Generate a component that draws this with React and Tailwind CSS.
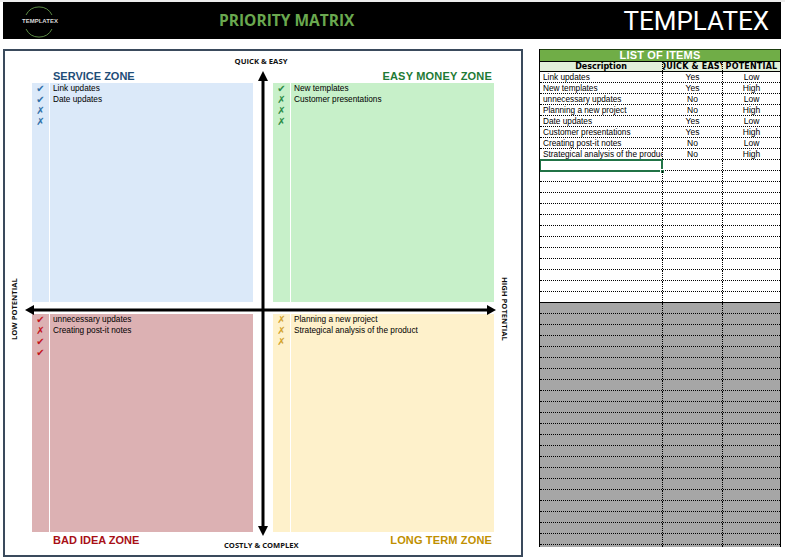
import React from "react";

const SANS = "font-['Liberation_Sans',Arial,sans-serif]";
const PIXEL = "font-['DejaVu_Sans',Verdana,sans-serif]";

// Quadrant contents
const zones = {
  service: {
    box: "bg-[#dbe9f9]",
    mark: "text-[#2f6fa8]",
    marks: ["✔", "✔", "✗", "✗"],
    items: ["Link updates", "Date updates"],
  },
  easy: {
    box: "bg-[#c7f0c9]",
    mark: "text-[#2b8a45]",
    marks: ["✔", "✗", "✗", "✗"],
    items: ["New templates", "Customer presentations"],
  },
  bad: {
    box: "bg-[#dcb1b3]",
    mark: "text-[#c4141c]",
    marks: ["✔", "✗", "✔", "✔"],
    items: ["unnecessary updates", "Creating post-it notes"],
  },
  long: {
    box: "bg-[#fef1cb]",
    mark: "text-[#d3a22e]",
    marks: ["✗", "✗", "✗"],
    items: ["Planning a new project", "Strategical analysis of the product"],
  },
};

const rows = [
  ["Link updates", "Yes", "Low"],
  ["New templates", "Yes", "High"],
  ["unnecessary updates", "No", "Low"],
  ["Planning a new project", "No", "High"],
  ["Date updates", "Yes", "Low"],
  ["Customer presentations", "Yes", "High"],
  ["Creating post-it notes", "No", "Low"],
  ["Strategical analysis of the product", "No", "High"],
];

const Zone = ({ zone, height }) => (
  <div className={`flex ${zone.box} ${height}`}>
    <div className="w-[17px] shrink-0 border-r border-white box-content">
      {zone.marks.map((m, i) => (
        <div key={i} className={`h-[11px] flex items-center justify-center text-[10px] font-bold leading-none ${PIXEL} ${zone.mark}`}>
          {m}
        </div>
      ))}
    </div>
    <div className="pl-[3px] pt-[1px]">
      {zone.items.map((t) => (
        <div key={t} className={`h-[11px] flex items-center text-[8.25px] leading-none whitespace-nowrap text-black ${SANS}`}>
          {t}
        </div>
      ))}
    </div>
  </div>
);

const Row = ({ row, bottom, selected }) => (
  <div className={`relative flex h-[11px] border-b border-black ${bottom ? "border-solid" : "border-dotted"}`}>
    <div className={`w-[122px] shrink-0 overflow-hidden whitespace-nowrap pl-[3px] text-[8.25px] leading-[11px] ${SANS}`}>
      {row[0]}
    </div>
    <div className={`w-[60px] shrink-0 border-l border-dotted border-black text-center text-[8.5px] leading-[10px] ${SANS}`}>{row[1]}</div>
    <div className={`flex-1 border-l border-dotted border-black text-center text-[8.5px] leading-[10px] ${SANS}`}>{row[2]}</div>
    {selected && (
      <>
        <div className="absolute left-[-1px] top-[-1px] w-[124px] h-[13px] border-2 border-[#217346]" />
        <div className="absolute left-[120px] top-[9px] w-[5px] h-[5px] bg-[#217346] border border-white" />
      </>
    )}
  </div>
);

const emptyRow = ["", "", ""];

export default function App() {
  return (
    <div className="w-[785px] h-[560px] overflow-hidden bg-white">
      <div className="h-[2px] bg-[#ececec]" />

      {/* Top banner */}
      <div className="mx-[3px] w-[778px] h-[37px] bg-black flex items-center justify-between relative">
        <div className="relative w-[60px] h-[37px] ml-[4px]">
          <svg className="absolute left-[14px] top-[2px]" width="36" height="36" viewBox="0 0 36 36" fill="none">
            <path d="M5 11 A14.5 14.5 0 0 1 31 11" stroke="#5c8a45" strokeWidth="1" />
            <path d="M5 25 A14.5 14.5 0 0 0 31 25" stroke="#5c8a45" strokeWidth="1" />
          </svg>
          <span className={`absolute left-[15px] top-[16px] text-[6px] leading-[7px] font-bold text-[#d9d9d9] ${SANS}`}>TEMPLATEX</span>
        </div>
        <div className="absolute left-[216px] top-0 h-[37px] flex items-center text-[#6aa84f] text-[15.5px] font-bold font-['Open_Sans',sans-serif]">
          PRIORITY MATRIX
        </div>
        <div className="mr-[12px] text-white text-[26px] leading-none font-['Roboto',sans-serif]">
          TEMPLATEX
        </div>
      </div>

      <div className="mt-[10px] ml-[3px] flex items-start gap-[16px]">
        {/* Matrix */}
        <div className="relative w-[520px] h-[508px] border-2 border-[#3a4a5c] pl-[27px]">
          <div className="h-[21px] pt-[5px] text-center pr-[31px] text-[7.7px] leading-[10px] font-bold text-[#111] font-['Open_Sans',sans-serif] whitespace-nowrap">
            QUICK &amp; EASY
          </div>
          <div className="grid grid-cols-[221px_221px] gap-x-[20px]">
            <div>
              <div className={`h-[9px] mb-[2px] overflow-hidden flex items-end pl-[21px] text-[11px] leading-[9px] font-bold text-[#1f4e78] ${SANS}`}>SERVICE ZONE</div>
              <Zone zone={zones.service} height="h-[219px]" />
            </div>
            <div>
              <div className={`h-[9px] mb-[2px] overflow-hidden flex items-end justify-end pr-[2px] text-[11px] leading-[9px] tracking-[0.2px] font-bold text-[#1e7a35] ${SANS}`}>EASY MONEY ZONE</div>
              <Zone zone={zones.easy} height="h-[219px]" />
            </div>
            <div className="mt-[12px]">
              <Zone zone={zones.bad} height="h-[218px]" />
              <div className={`mt-[3px] pl-[21px] text-[11px] leading-[11px] font-bold text-[#a80f16] ${SANS}`}>BAD IDEA ZONE</div>
            </div>
            <div className="mt-[12px]">
              <Zone zone={zones.long} height="h-[218px]" />
              <div className={`mt-[3px] pr-[2px] text-right text-[11px] leading-[11px] tracking-[0.15px] font-bold text-[#bf9000] ${SANS}`}>LONG TERM ZONE</div>
            </div>
          </div>

          {/* Axes */}
          <svg className="absolute left-[18px] top-[20px]" width="480" height="466" viewBox="0 0 480 466">
            <path d="M238.5 8 H241.5 V456 H238.5 Z" fill="#000" />
            <path d="M240 0 L235 10 H245 Z" fill="#000" />
            <path d="M240 465 L235 455 H245 Z" fill="#000" />
            <path d="M8 237.5 H466 V240.5 H8 Z" fill="#000" />
            <path d="M2 239 L11 234 V244 Z" fill="#000" />
            <path d="M473 239 L464 234 V244 Z" fill="#000" />
          </svg>
          <span className="absolute left-[219px] top-[489px] text-[7.6px] leading-[10px] font-bold text-[#111] font-['Open_Sans',sans-serif] whitespace-nowrap">COSTLY &amp; COMPLEX</span>
          <span className="absolute left-[4px] top-[227px] h-[62px] w-[10px] [writing-mode:vertical-rl] rotate-180 text-[7.6px] leading-[10px] font-bold text-[#111] font-['Open_Sans',sans-serif] whitespace-nowrap">LOW POTENTIAL</span>
          <span className="absolute left-[495px] top-[226px] h-[64px] w-[10px] [writing-mode:vertical-rl] text-[7.6px] leading-[10px] font-bold text-[#111] font-['Open_Sans',sans-serif] whitespace-nowrap">HIGH POTENTIAL</span>
        </div>

        {/* List of items */}
        <div className="w-[242px] h-[498px] overflow-hidden border-x border-black">
          <div className="h-[12px] bg-[#70ad47] border-t border-[#1d3d0e] overflow-hidden flex justify-center items-start">
            <span className={`text-white text-[11px] leading-[10px] font-bold tracking-[0.15px] ${SANS}`}>LIST OF ITEMS</span>
          </div>
          <div className={`flex h-[11px] bg-[#e2efda] border-y border-black text-[8px] leading-[9px] font-bold text-black ${PIXEL}`}>
            <div className="w-[122px] shrink-0 text-center">Description</div>
            <div className="w-[60px] shrink-0 border-l border-dotted border-black flex justify-center overflow-hidden whitespace-nowrap tracking-[0.2px]">
              <span className="shrink-0">QUICK &amp; EASY</span>
            </div>
            <div className="flex-1 border-l border-dotted border-black text-center tracking-[0.2px]">POTENTIAL</div>
          </div>
          {rows.map((r) => (
            <Row key={r[0]} row={r} />
          ))}
          {Array.from({ length: 13 }).map((_, i) => (
            <Row key={i} row={emptyRow} selected={i === 0} bottom={i === 12} />
          ))}
          <div className="bg-[#a6a6a6] h-[246px] overflow-hidden border-b border-black">
            {Array.from({ length: 23 }).map((_, i) => (
              <Row key={i} row={emptyRow} />
            ))}
          </div>
        </div>
      </div>
    </div>
  );
}
